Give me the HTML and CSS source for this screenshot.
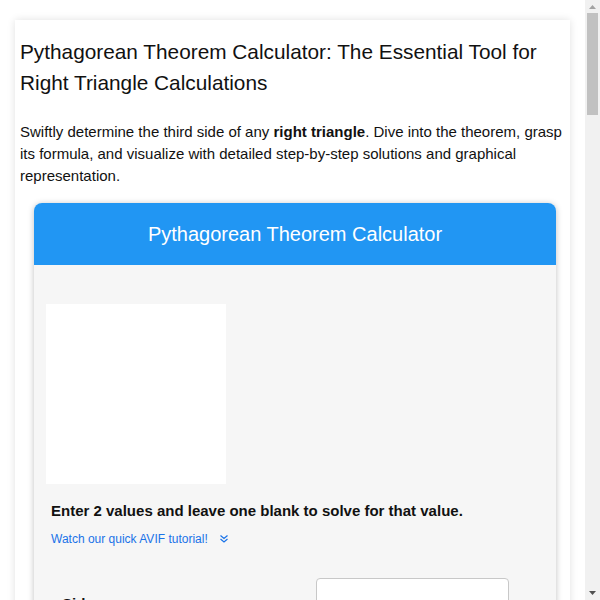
FILE: index.html
```html
<!DOCTYPE html>
<html>
<head>
<meta charset="utf-8">
<link rel="stylesheet" href="styles.css">
</head>
<body>
<div class="page">
  <h1 class="title">Pythagorean Theorem Calculator: The Essential Tool for Right Triangle Calculations</h1>
  <p class="intro">Swiftly determine the third side of any <b>right triangle</b>. Dive into the theorem, grasp its formula, and visualize with detailed step-by-step solutions and graphical representation.</p>
  <div class="calc">
    <div class="calc-head">Pythagorean Theorem Calculator</div>
    <div class="calc-body">
      <div class="canvas"></div>
      <p class="instr">Enter 2 values and leave one blank to solve for that value.</p>
      <div class="tut"><a class="tut-link" href="#">Watch our quick AVIF tutorial!</a>
        <svg class="chev" width="10" height="10" viewBox="0 0 10 10"><path d="M1.5 1.5 L5 4.5 L8.5 1.5 M1.5 5 L5 8 L8.5 5" fill="none" stroke="#1a73e8" stroke-width="1.2"/></svg>
      </div>
      <div class="row">
        <label class="lbl">Side a</label>
        <input class="inp" type="text">
      </div>
      <div class="row">
        <label class="lbl">Side b</label>
        <input class="inp" type="text">
      </div>
      <div class="row">
        <label class="lbl">Hypotenuse c</label>
        <input class="inp" type="text">
      </div>
    </div>
  </div>
</div>
<div class="scrollbar">
  <div class="sb-btn"><svg width="15" height="13" viewBox="0 0 15 13"><path d="M4 9 L7.5 5 L11 9 Z" fill="#a3a3a3"/></svg></div>
  <div class="sb-track"><div class="sb-thumb"></div></div>
  <div class="sb-btn"><svg width="15" height="13" viewBox="0 0 15 13"><path d="M4 4 L7.5 8 L11 4 Z" fill="#505050"/></svg></div>
</div>
</body>
</html>
```

FILE: styles.css
```css
html, body {
  margin: 0;
  padding: 0;
  background: #ffffff;
  font-family: "Liberation Sans", Arial, sans-serif;
  color: #111;
}
body {
  margin-right: 15px;
}
.page {
  margin: 20px 15px 40px;
  padding: 1px 5px 40px;
  background: #fff;
  box-shadow: 0 0 8px rgba(0,0,0,0.12);
}
.title {
  font-size: 20.8px;
  font-weight: normal;
  line-height: 31px;
  margin: 15px 0 21px;
}
.intro {
  font-size: 15px;
  line-height: 22px;
  margin: 0 0 16px;
  padding-top: 2px;
}
.calc {
  margin: 0 9px 0 14px;
  border-radius: 8px;
  overflow: hidden;
  box-shadow: 0 1px 6px rgba(0,0,0,0.25);
  background: #f6f6f6;
}
.calc-head {
  background: #2196f3;
  color: #fff;
  height: 62px;
  display: flex;
  align-items: center;
  justify-content: center;
  font-size: 20px;
}
.calc-body {
  padding: 39px 12px 30px;
}
.canvas {
  width: 180px;
  height: 180px;
  background: #fff;
}
.instr {
  font-size: 15px;
  font-weight: bold;
  margin: 18px 0 0 5px;
  line-height: 18px;
}
.tut {
  margin: 12px 0 0 5px;
  display: flex;
  align-items: center;
  gap: 11px;
  font-size: 12px;
}
.tut-link {
  color: #1a73e8;
  text-decoration: none;
}
.chev { display: block; }
.row {
  display: flex;
  align-items: center;
  margin-top: 32px;
  padding-left: 16px;
}
.lbl {
  width: 254px;
  font-size: 15px;
  font-weight: bold;
}
.inp {
  width: 193px;
  height: 50px;
  box-sizing: border-box;
  border: 1px solid #c8c8c8;
  border-radius: 4px;
  background: #fff;
}
.scrollbar {
  position: fixed;
  top: 0;
  right: 0;
  bottom: 0;
  width: 15px;
  background: #f1f1f1;
  display: flex;
  flex-direction: column;
}
.sb-btn {
  height: 13px;
  flex: none;
}
.sb-btn svg { display: block; }
.sb-track {
  flex: 1;
  padding: 0 2px;
}
.sb-thumb {
  height: 102px;
  background: #c1c1c1;
}
```
